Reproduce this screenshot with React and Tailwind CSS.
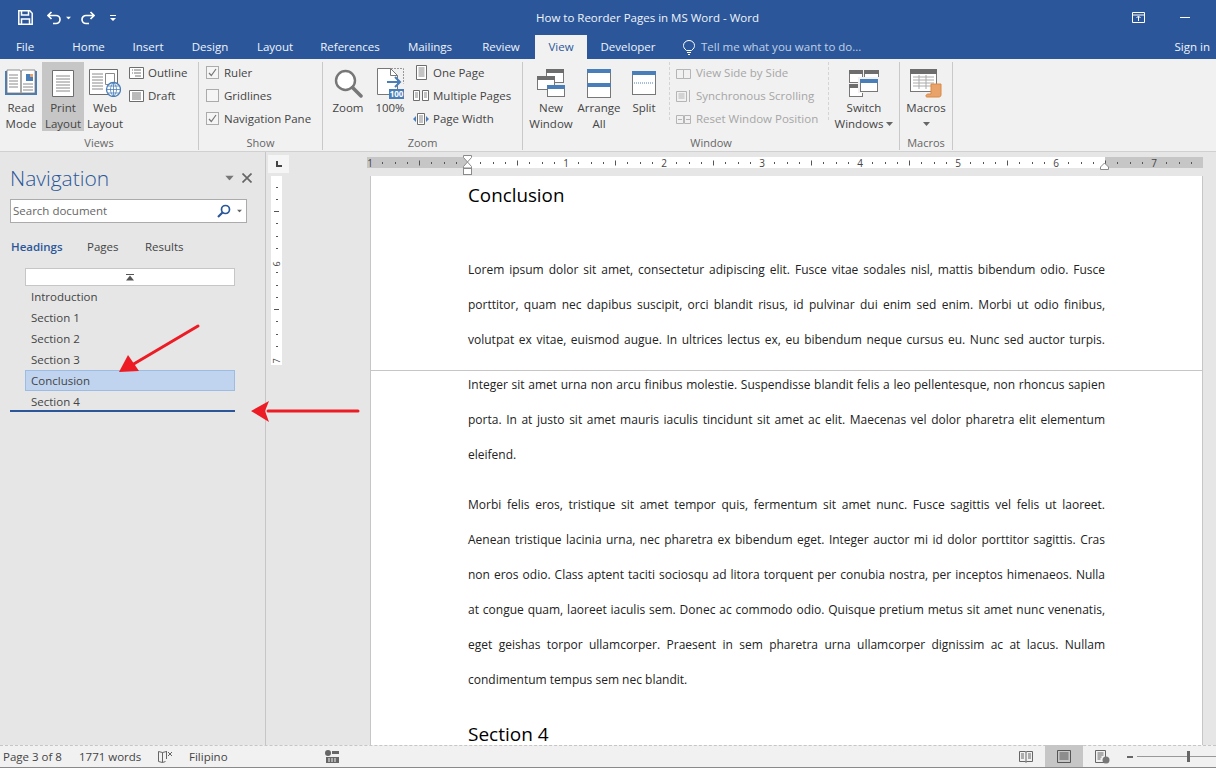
const tabs = [
  { label: 'Home', w: 'w-[61px]' },
  { label: 'Insert', w: 'w-[58px]' },
  { label: 'Design', w: 'w-[66px]' },
  { label: 'Layout', w: 'w-[64px]' },
  { label: 'References', w: 'w-[86px]' },
  { label: 'Mailings', w: 'w-[74px]' },
  { label: 'Review', w: 'w-[68px]' },
];

const para1 = [
  'Lorem ipsum dolor sit amet, consectetur adipiscing elit. Fusce vitae sodales nisl, mattis bibendum odio. Fusce',
  'porttitor, quam nec dapibus suscipit, orci blandit risus, id pulvinar dui enim sed enim. Morbi ut odio finibus,',
  'volutpat ex vitae, euismod augue. In ultrices lectus ex, eu bibendum neque cursus eu. Nunc sed auctor turpis.',
];
const para2 = [
  'Integer sit amet urna non arcu finibus molestie. Suspendisse blandit felis a leo pellentesque, non rhoncus sapien',
  'porta. In at justo sit amet mauris iaculis tincidunt sit amet ac elit. Maecenas vel dolor pharetra elit elementum',
];
const para3 = [
  'Morbi felis eros, tristique sit amet tempor quis, fermentum sit amet nunc. Fusce sagittis vel felis ut laoreet.',
  'Aenean tristique lacinia urna, nec pharetra ex bibendum eget. Integer auctor mi id dolor porttitor sagittis. Cras',
  'non eros odio. Class aptent taciti sociosqu ad litora torquent per conubia nostra, per inceptos himenaeos. Nulla',
  'at congue quam, laoreet iaculis sem. Donec ac commodo odio. Quisque pretium metus sit amet nunc venenatis,',
  'eget geishas torpor ullamcorper. Praesent in sem pharetra urna ullamcorper dignissim ac at lacus. Nullam',
];

const Line = ({ children }) => (
  <div className="h-[24px] leading-[24px] text-justify [text-align-last:justify] whitespace-nowrap">{children}</div>
);

const Lines = ({ items }) => items.map((t) => <Line key={t}>{t}</Line>);

const Big = ({ icon, label, w, active }) => (
  <div className={`${w} h-[69px] flex flex-col items-center ${active ? 'bg-[#c6c6c6]' : ''}`}>
    <div className="h-[38px] shrink-0 w-full flex items-center justify-center pt-[4px]">{icon}</div>
    <div className="text-center leading-[16px] whitespace-pre">{label}</div>
  </div>
);

const Row = ({ icon, label, gray }) => (
  <div className={`h-[23px] pb-[2px] flex items-center gap-[4px] whitespace-nowrap ${gray ? 'text-[#a6a6a6]' : ''}`}>
    <span className="w-[16px] h-[16px] flex items-center justify-center">{icon}</span>
    {label}
  </div>
);

const Check = ({ checked, label }) => (
  <div className="h-[23px] pb-[2px] flex items-center gap-[5px] whitespace-nowrap">
    <span className="w-[13px] h-[13px] border border-[#ababab] bg-[#f5f5f5] flex items-center justify-center">
      {checked && (
        <svg width="9" height="9" viewBox="0 0 9 9" fill="none" stroke="#777" strokeWidth="1.2">
          <path d="M1 5l2.3 2.5L8 1" />
        </svg>
      )}
    </span>
    {label}
  </div>
);

const Group = ({ w, label, children }) => (
  <div className={`${w} h-[88px] flex flex-col border-r border-[#c9c9c9] shrink-0`}>
    <div className="h-[69px] flex">{children}</div>
    <div className="h-[19px] text-center text-[11px] leading-[23px] text-[#666]">{label}</div>
  </div>
);

const ReadIcon = () => (
  <svg width="32" height="28" viewBox="0 0 32 28" fill="none">
    <path d="M0 2h32v24H0z" fill="#4a7eb8" />
    <path d="M2 1h13l1 2v22l-1-1H2zM30 1H17l-1 2v22l1-1h13z" fill="#fff" stroke="#777" strokeWidth=".8" />
    <path d="M4 6h9M4 9h9M4 12h9M4 15h9M4 18h9M18 15h10M18 18h10M18 21h10" stroke="#8a8a8a" />
    <path d="M21 5h7v7h-7z" fill="#4a7eb8" />
    <path d="M25 5h3v3h-3z" fill="#e8a26a" />
  </svg>
);
const PrintIcon = () => (
  <svg width="22" height="27" viewBox="0 0 22 27" fill="#fff" stroke="#6d6d6d">
    <path d="M.5.5h21v26H.5z" />
    <path d="M4 6h14M4 9h14M4 12h14M4 15h14M4 18h14M4 21h14" stroke="#8a8a8a" />
  </svg>
);
const WebIcon = () => (
  <svg width="32" height="28" viewBox="0 0 32 28" fill="none">
    <path d="M.5.5h28v25H.5z" fill="#fff" stroke="#6d6d6d" />
    <path d="M3 5h11M3 8h11M3 11h11M3 14h11M3 17h11M3 20h11" stroke="#8a8a8a" />
    <path d="M16.500 4.500h9v11h-9z" stroke="#8a8a8a" />
    <circle cx="24.500" cy="20.500" r="7" fill="#fff" stroke="#4a7eb8" strokeWidth="1.3" />
    <path d="M17.500 20.500h14M24.500 13.500v14M19 17h11M19 24h11M24.500 13.500c-4 4-4 10 0 14M24.500 13.500c4 4 4 10 0 14" stroke="#4a7eb8" strokeWidth=".8" />
  </svg>
);
const OutlineIcon = () => (
  <svg width="15" height="12" viewBox="0 0 15 12" fill="#fff" stroke="#6d6d6d">
    <path d="M.5.500h14v11H.5z" />
    <path d="M3 3h1M5 3h7M5 6h7M6 9h6M3 6h1" stroke="#777" />
  </svg>
);
const DraftIcon = () => (
  <svg width="15" height="12" viewBox="0 0 15 12" fill="#fff" stroke="#6d6d6d">
    <path d="M.5.500h14v11H.5z" />
    <path d="M3 3h9M3 5h9M3 7h9M3 9h9" stroke="#777" />
  </svg>
);
const ZoomIcon = () => (
  <svg width="29" height="29" viewBox="0 0 29 29" fill="none">
    <circle cx="11.500" cy="11.500" r="9.500" fill="#fff" stroke="#777" strokeWidth="2.400" />
    <path d="M18.500 18.500L27 27" stroke="#777" strokeWidth="3.500" strokeLinecap="round" />
  </svg>
);
const HundredIcon = () => (
  <svg width="27" height="31" viewBox="0 0 27 31" fill="none" className="overflow-visible">
    <path d="M.5.500h13l7 7v19H.5z" fill="#fff" stroke="#777" />
    <path d="M13.500.5v7h7" stroke="#777" />
    <path d="M14 .5h12.500v15" stroke="#999" strokeDasharray="2 1" />
    <path d="M10 14h13M18 9l5 5-5 5" stroke="#4a7eb8" strokeWidth="2" />
    <rect x="12" y="21" width="15" height="10" fill="#4a7eb8" />
    <text x="19.500" y="29" textAnchor="middle" fontSize="8" fontWeight="700" fill="#fff" stroke="none">100</text>
  </svg>
);
const OnePageIcon = () => (
  <svg width="11" height="15" viewBox="0 0 11 15" fill="#fff" stroke="#6d6d6d">
    <path d="M.5.500h10v14H.5z" />
    <path d="M2.500 3h6M2.500 5h6M2.500 7h6M2.500 9h6M2.500 11h6" stroke="#888" />
  </svg>
);
const MultiIcon = () => (
  <svg width="16" height="11" viewBox="0 0 16 11" fill="#fff" stroke="#6d6d6d">
    <path d="M.5.500h6v10h-6zM9.500.5h6v10h-6z" />
    <path d="M2 3h3M2 5h3M2 7h3M11 3h3M11 5h3M11 7h3" stroke="#888" />
  </svg>
);
const WidthIcon = () => (
  <svg width="16" height="12" viewBox="0 0 16 12" fill="none">
    <path d="M4.500.5h7v11h-7z" fill="#fff" stroke="#6d6d6d" />
    <path d="M6 3h4M6 5h4M6 7h4M6 9h4" stroke="#888" />
    <path d="M3 3L0 6l3 3zM13 3l3 3-3 3z" fill="#4a7eb8" />
  </svg>
);
const WinBox = ({ x, y, w, h, bar }) => (
  <g>
    <rect x={x + 0.5} y={y + 0.5} width={w} height={h} fill="#fff" stroke="#777" />
    <rect x={x} y={y} width={w + 1} height="4" fill={bar} />
  </g>
);
const NewWinIcon = () => (
  <svg width="28" height="28" viewBox="0 0 28 28">
    <WinBox x={9} y={0} w={17} h={13} bar="#6d6d6d" />
    <WinBox x={0} y={7} w={17} h={13} bar="#6d6d6d" />
    <WinBox x={10} y={16} w={17} h={11} bar="#4a7eb8" />
  </svg>
);
const ArrangeIcon = () => (
  <svg width="24" height="29" viewBox="0 0 24 29">
    <rect x=".5" y=".5" width="23" height="28" fill="#fff" stroke="#777" />
    <rect x="0" y="0" width="24" height="4" fill="#4a7eb8" />
    <rect x="0" y="14" width="24" height="4" fill="#4a7eb8" />
  </svg>
);
const SplitIcon = () => (
  <svg width="24" height="24" viewBox="0 0 24 24">
    <rect x=".5" y=".5" width="23" height="23" fill="#fff" stroke="#777" />
    <rect x="0" y="0" width="24" height="4" fill="#4a7eb8" />
    <path d="M2 12h20" stroke="#4a7eb8" strokeDasharray="1 1" />
  </svg>
);
const SwitchIcon = () => (
  <svg width="30" height="27" viewBox="0 0 30 27">
    <WinBox x={0} y={0} w={13} h={12} bar="#6d6d6d" />
    <WinBox x={15} y={0} w={14} h={12} bar="#6d6d6d" />
    <WinBox x={0} y={14} w={13} h={12} bar="#6d6d6d" />
    <rect x="10" y="8" width="19" height="14" fill="#fff" stroke="#f1f1f1" strokeWidth="2" />
    <WinBox x={11} y={9} w={17} h={12} bar="#4a7eb8" />
  </svg>
);
const MacrosIcon = () => (
  <svg width="32" height="29" viewBox="0 0 32 29" fill="none">
    <rect x=".5" y=".5" width="26" height="22" fill="#fff" stroke="#777" />
    <rect x="0" y="0" width="27" height="5" fill="#6d6d6d" />
    <path d="M3 8h21M3 11h21M3 14h21M3 17h21M9 6v14M16 6v14" stroke="#aaa" />
    <path d="M21 15h10v11c0 2-2 2-3 2H17c-2 0-1-3 1-3h3z" fill="#e8a26a" stroke="#d98a45" />
  </svg>
);
const GrayDoc = ({ d }) => (
  <svg width="16" height="14" viewBox="0 0 16 14" fill="none" stroke="#b5b5b5">
    <path d={d} />
  </svg>
);

const Caret = ({ color = '#666', cls = '' }) => (
  <svg width="7" height="4" viewBox="0 0 7 4" className={cls}>
    <path d="M0 0h7L3.500 4z" fill={color} />
  </svg>
);

const HorizontalRuler = () => {
  const x0 = 101;
  const ticks = [];
  for (let i = -7; i < 60; i++) {
    if (i % 8 === 0) continue;
    const x = x0 + i * 12.25;
    if (x > 835) break;
    const tall = i % 4 === 0;
    ticks.push(<rect key={i} x={Math.round(x)} y={tall ? 8.5 : 10} width="1" height={tall ? 5 : 2} fill="#555" />);
  }
  const nums = [-1, 1, 2, 3, 4, 5, 6, 7];
  return (
    <svg width="849" height="24" viewBox="0 0 849 24" className="shrink-0">
      <rect x="0" y="5" width="836" height="11" fill="#fff" />
      <rect x="0" y="5" width="100" height="11" fill="#c6c6c6" />
      <rect x="738" y="5" width="98" height="11" fill="#c6c6c6" />
      {ticks}
      {nums.map((n) => (
        <text key={n} x={x0 + n * 98} y="14.500" textAnchor="middle" fontSize="10" fill="#444">{Math.abs(n)}</text>
      ))}
      <path d="M96.500 3.500h8v2l-4 4.500 4 4.500v1.500h-8v-1.500l4-4.500-4-4.500z" fill="#fff" stroke="#8a8a8a" />
      <rect x="96.500" y="16.500" width="8" height="6" fill="#fff" stroke="#8a8a8a" />
      <path d="M737.500 11l-4 4v2.500h8V15z" fill="#fff" stroke="#8a8a8a" />
    </svg>
  );
};

const VerticalRuler = () => {
  const ticks = [];
  for (let i = 1; i <= 15; i++) {
    if (i === 7 || i === 15) continue;
    const y = 11 + (i - 1) * 12.25 - 0.5;
    const tall = i === 3 || i === 11;
    ticks.push(<rect key={i} x={tall ? 3 : 5} y={Math.round(y)} width={tall ? 5 : 2} height="1" fill="#555" />);
  }
  return (
    <svg width="11" height="189" viewBox="0 0 11 189" className="ml-[5px]">
      <rect width="11" height="189" fill="#fff" />
      {ticks}
      <text x="0" y="0" transform="translate(9 88) rotate(-90)" textAnchor="middle" fontSize="9" fill="#444">6</text>
      <text x="0" y="0" transform="translate(9 185) rotate(-90)" textAnchor="middle" fontSize="9" fill="#444">7</text>
    </svg>
  );
};

export default function App() {
  return (
    <div className="relative w-[1216px] h-[768px] overflow-hidden flex flex-col bg-[#e6e6e6] text-[#444] text-[11.5px] font-['Open_Sans',sans-serif]">
      {/* title bar */}
      <div className="h-[35px] shrink-0 bg-[#2b579a] flex items-center text-white">
        <div className="w-[536px] shrink-0 flex items-center pl-[18px]">
          <svg width="15" height="15" viewBox="0 0 15 15" fill="none" stroke="#fff" strokeWidth="1.500">
            <path d="M.8.800h11l2.400 2.400v11H.8z" />
            <path d="M3.500 1v4h7V1M3.500 14V9h8v5" />
          </svg>
          <svg width="15" height="14" viewBox="0 0 15 14" fill="none" stroke="#fff" strokeWidth="1.700" className="ml-[14px]">
            <path d="M1 4.500h8a4 4 0 010 8H6M4.500 1L1 4.500 4.500 8" />
          </svg>
          <Caret color="#fff" cls="ml-[3px] scale-75" />
          <svg width="15" height="14" viewBox="0 0 15 14" fill="none" stroke="#fff" strokeWidth="1.700" className="ml-[8px]">
            <path d="M14 4.500H6a4 4 0 000 8h3M10.500 1L14 4.500 10.500 8" />
          </svg>
          <svg width="6" height="6" viewBox="0 0 6 6" fill="#fff" className="ml-[15px]">
            <path d="M0 0h6v1H0zM0 3h6L3 6z" />
          </svg>
        </div>
        <div className="w-[596px] shrink-0 text-[11.5px] whitespace-nowrap text-[#f0f4fa]">How to Reorder Pages in MS Word - Word</div>
        <svg width="13" height="11" viewBox="0 0 13 11" fill="none" stroke="#fff">
          <path d="M.5.500h12v10H.5zM.5 3h12M6.500 9V4.500M4.500 6l2-2 2 2" />
        </svg>
        <div className="w-[10px] h-px bg-white ml-[35px]" />
      </div>

      {/* tabs */}
      <div className="h-[24px] shrink-0 bg-[#2b579a] flex text-[11.5px] text-[#f0f4fa] leading-[24px]">
        <div className="w-[50px] text-center">File</div>
        <div className="w-[8px]" />
        {tabs.map((t) => (
          <div key={t.label} className={`${t.w} text-center`}>{t.label}</div>
        ))}
        <div className="w-[52px] bg-[#f1f1f1] text-[#2b579a] text-center">View</div>
        <div className="w-[82px] text-center">Developer</div>
        <div className="ml-[14px] flex items-center gap-[6px] text-[#c0d0e6]">
          <svg width="12" height="15" viewBox="0 0 12 15" fill="none" stroke="#fff">
            <path d="M3.500 10.500C1 8.500.5 7 .5 5.500a5.500 5 0 0111 0c0 1.500-.5 3-3 5zM4 12.500h4M5 14.500h2" />
          </svg>
          Tell me what you want to do...
        </div>
        <div className="ml-auto pr-[6px]">Sign in</div>
      </div>

      {/* ribbon */}
      <div className="h-[93px] shrink-0 bg-[#f1f1f1] border-b border-[#d0d0d0] flex pt-[3px]">
        <Group w="w-[199px]" label="Views">
          <Big w="w-[42px]" icon={<ReadIcon />} label={'Read\nMode'} />
          <Big w="w-[42px]" active icon={<PrintIcon />} label={'Print\nLayout'} />
          <Big w="w-[42px]" icon={<WebIcon />} label={'Web\nLayout'} />
          <div className="ml-[2px] w-[66px]">
            <Row icon={<OutlineIcon />} label="Outline" />
            <Row icon={<DraftIcon />} label="Draft" />
          </div>
        </Group>
        <Group w="w-[124px]" label="Show">
          <div className="pl-[7px]">
            <Check checked label="Ruler" />
            <Check label="Gridlines" />
            <Check checked label="Navigation Pane" />
          </div>
        </Group>
        <Group w="w-[200px]" label="Zoom">
          <Big w="w-[50px]" icon={<ZoomIcon />} label="Zoom" />
          <Big w="w-[34px]" icon={<HundredIcon />} label="100%" />
          <div className="ml-[6px] flex-1">
            <Row icon={<OnePageIcon />} label="One Page" />
            <Row icon={<MultiIcon />} label="Multiple Pages" />
            <Row icon={<WidthIcon />} label="Page Width" />
          </div>
        </Group>
        <Group w="w-[377px]" label="Window">
          <Big w="w-[56px]" icon={<NewWinIcon />} label={'New\nWindow'} />
          <Big w="w-[40px]" icon={<ArrangeIcon />} label={'Arrange\nAll'} />
          <Big w="w-[50px]" icon={<SplitIcon />} label="Split" />
          <div className="w-[160px] pl-[6px] border-x border-dashed border-[#d4d4d4] h-[58px]">
            <Row gray icon={<GrayDoc d="M.5 3.500h7v9h-7zM7.500 3.500h7v9h-7z" />} label="View Side by Side" />
            <Row gray icon={<GrayDoc d="M.5 2.500h10v10H.5zM2.500 5h6M2.500 7h6M2.500 9h6M13.500 1v12" />} label="Synchronous Scrolling" />
            <Row gray icon={<GrayDoc d="M.5 3.500h7v8h-7zM8.500 3.500h6v8h-6zM2 7.500h4M10 7.500h4" />} label="Reset Window Position" />
          </div>
          <div className="w-[70px] h-[69px] flex flex-col items-center">
            <div className="h-[38px] shrink-0 flex items-center pt-[4px]"><SwitchIcon /></div>
            <div className="leading-[16px]">Switch</div>
            <div className="leading-[16px] flex items-center gap-[3px] whitespace-nowrap">Windows <Caret /></div>
          </div>
        </Group>
        <Group w="w-[53px]" label="Macros">
          <div className="w-full h-[69px] flex flex-col items-center">
            <div className="h-[38px] shrink-0 flex items-center pt-[4px]"><MacrosIcon /></div>
            <div className="leading-[16px]">Macros</div>
            <div className="h-[16px] flex items-center"><Caret /></div>
          </div>
        </Group>
      </div>

      {/* body */}
      <div className="flex-1 min-h-0 flex">
        {/* navigation pane */}
        <div className="w-[266px] shrink-0 border-r border-[#c6c6c6] pl-[10px]">
          <div className="flex items-center h-[47px] pt-[4px] pr-[11px]">
            <div className="text-[21px] font-light text-[#2b579a] leading-[28px] flex-1">Navigation</div>
            <Caret color="#777" cls="scale-125 mr-[9px]" />
            <svg width="10" height="10" viewBox="0 0 10 10" stroke="#666" strokeWidth="1.700" className="mr-[2px]">
              <path d="M.5.500l9 9M9.500.5l-9 9" />
            </svg>
          </div>
          <div className="w-[237px] h-[24px] bg-white border border-[#ababab] flex items-center pl-[2px] pr-[3px] text-[#666]">
            <span className="flex-1">Search document</span>
            <svg width="14" height="14" viewBox="0 0 14 14" fill="none" stroke="#2b579a" strokeWidth="1.700">
              <circle cx="8.500" cy="5.500" r="4" />
              <path d="M5.500 8.500L1 13" strokeWidth="2.200" />
            </svg>
            <Caret cls="ml-[5px] scale-75" />
          </div>
          <div className="flex h-[45px] items-center pl-[1px] pt-[3px]">
            <span className="w-[76px] font-semibold text-[#2b579a]">Headings</span>
            <span className="w-[58px]">Pages</span>
            <span>Results</span>
          </div>
          <div className="ml-[15px] w-[210px] h-[18px] bg-white border border-[#c6c6c6] flex items-center justify-center">
            <svg width="8" height="7" viewBox="0 0 8 7" fill="#555">
              <path d="M0 0h8v1H0zM4 1.500L8 6.500H0z" />
            </svg>
          </div>
          <div className="ml-[15px] w-[210px] leading-[21px]">
            <div className="h-[21px] pl-[6px]">Introduction</div>
            <div className="h-[21px] pl-[6px]">Section 1</div>
            <div className="h-[21px] pl-[6px]">Section 2</div>
            <div className="h-[21px] pl-[6px]">Section 3</div>
            <div className="h-[21px] pl-[5px] bg-[#c0d4f0] border border-[#9dbce4] leading-[19px]">Conclusion</div>
            <div className="h-[19px] pl-[6px]">Section 4</div>
          </div>
          <div className="w-[225px] h-[2px] bg-[#2b579a]" />
        </div>

        {/* document column */}
        <div className="flex-1 min-w-0 flex flex-col">
          <div className="h-[24px] shrink-0 flex">
            <div className="w-[101px] shrink-0 pl-[1px] pt-[3px]">
              <div className="w-[21px] h-[18px] bg-[#f5f5f5] flex items-center justify-center ml-[1px]">
                <svg width="6" height="6" viewBox="0 0 6 6" fill="#444"><path d="M0 0h2v4h4v2H0z" /></svg>
              </div>
            </div>
            <HorizontalRuler />
          </div>
          <div className="flex-1 min-h-0 flex">
            <div className="w-[104px] shrink-0"><VerticalRuler /></div>
            <div className="w-[833px] shrink-0 bg-white border-x border-[#c6c6c6] overflow-hidden text-[12px] text-[#222]">
              <div className="h-[195px] border-b border-[#c6c6c6] pl-[97px] pr-[97px]">
                <div className="h-[82px] text-[18.8px] font-medium leading-[38px] text-black">Conclusion</div>
                <div className="flex flex-col gap-[11px]"><Lines items={para1} /></div>
              </div>
              <div className="pl-[97px] pr-[97px] pt-[2px] flex flex-col gap-[11px]">
                <Lines items={para2} />
                <div className="h-[24px] leading-[24px]">eleifend.</div>
                <div className="h-[4px]" />
                <Lines items={para3} />
                <div className="h-[24px] leading-[24px]">condimentum tempus sem nec blandit.</div>
                <div className="text-[19px] font-medium leading-[22px] text-black mt-[20px]">Section 4</div>
              </div>
            </div>
          </div>
        </div>
      </div>

      {/* status bar */}
      <div className="h-[23px] shrink-0 bg-[#f1f1f1] border-t border-dashed border-[#c6c6c6] flex items-center text-[11.5px] pb-[1px]">
        <span className="pl-[3px] w-[79px]">Page 3 of 8</span>
        <span className="w-[79px]">1771 words</span>
        <svg width="15" height="14" viewBox="0 0 15 14" fill="none" stroke="#666" className="shrink-0 mr-[16px]">
          <path d="M.5 1.500l4 1v10l-4-1zM4.500 2.500l4-1M4.500 12.500l3-1M10 2l4 4M14 2l-4 4" />
          <path d="M8.500 1v8" />
        </svg>
        <span className="w-[136px]">Filipino</span>
        <svg width="14" height="13" viewBox="0 0 14 13" fill="#666">
          <circle cx="3" cy="3" r="3" />
          <path d="M7 1h7v3H7zM1 7h13v6H1z" />
          <path d="M3 8.500h2v1H3zM6 8.500h2v1H6zM9 8.500h2v1H9zM3 10.500h2v1H3zM6 10.500h2v1H6zM9 10.500h2v1H9z" fill="#f1f1f1" />
        </svg>
        <div className="ml-auto flex items-center h-[23px]">
          <svg width="14" height="14" viewBox="0 0 14 14" fill="none" stroke="#666">
            <path d="M.5 1.500h6l.5 1 .5-1h6v10h-6l-.5 1-.5-1h-6zM7 2.500v9M2 4h3M2 6h3M2 8h3M9 4h3M9 6h3M9 8h3" />
          </svg>
          <div className="w-[38px] h-full bg-[#c6c6c6] ml-[12px] flex items-center justify-center">
            <svg width="14" height="13" viewBox="0 0 14 13" fill="none" stroke="#555">
              <path d="M.5.500h13v12H.5zM2.500 3h9M2.500 5h9M2.500 7h9M2.500 9h9" />
            </svg>
          </div>
          <svg width="15" height="14" viewBox="0 0 15 14" fill="none" stroke="#666" className="ml-[12px]">
            <path d="M.5.500h10v12H.5zM2.500 3h6M2.500 5h6M2.500 7h4M2.500 9h3" />
            <circle cx="11" cy="10" r="3.500" fill="#777" stroke="none" />
          </svg>
          <div className="w-[6px] h-[2px] bg-[#666] ml-[17px]" />
          <div className="w-[79px] h-px bg-[#999] ml-[4px] relative">
            <div className="absolute left-[50px] top-[-5px] w-[3px] h-[11px] bg-[#666]" />
          </div>
        </div>
      </div>
      <div className="absolute left-0 right-0 bottom-0 h-px bg-[#8a8a8a]" />

      {/* red annotation arrows */}
      <svg width="1216" height="768" viewBox="0 0 1216 768" className="absolute inset-0 pointer-events-none">
        <path d="M198 326L132 365" stroke="#ed1c24" strokeWidth="3" strokeLinecap="round" fill="none" />
        <path d="M119 372l9-17 11 16z" fill="#ed1c24" />
        <path d="M358 411H268" stroke="#ed1c24" strokeWidth="3" strokeLinecap="round" fill="none" />
        <path d="M251 411l18-10-4 10 4 11z" fill="#ed1c24" />
      </svg>
    </div>
  );
}
